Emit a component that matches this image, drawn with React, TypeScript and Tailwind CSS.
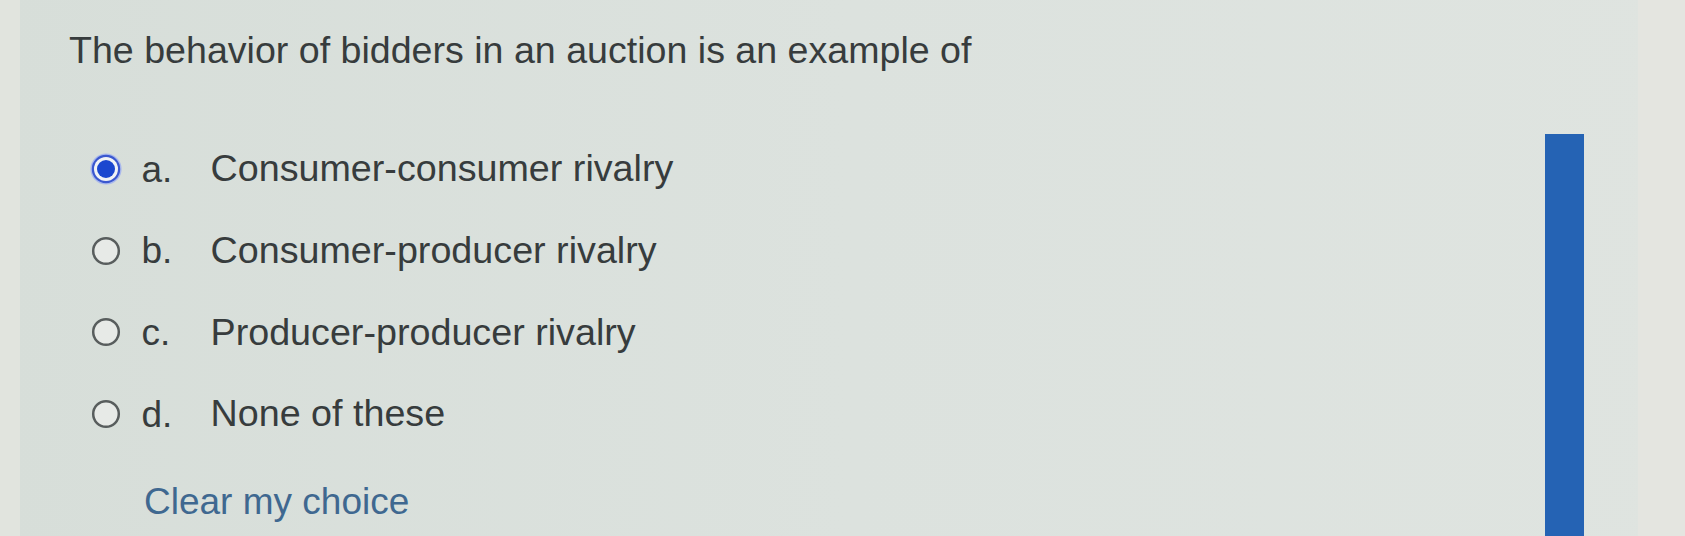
import React from "react";

function Radio({ checked }: { checked?: boolean }) {
  if (checked) {
    return (
      <svg width="32" height="32" viewBox="0 0 32 32" className="shrink-0">
        <circle cx="16" cy="16" r="15.6" fill="#a9b8ec" />
        <circle cx="16" cy="16" r="14.2" fill="#3b58cf" />
        <circle cx="16" cy="16" r="12" fill="#f1f3f6" />
        <circle cx="16" cy="16" r="9" fill="#1b47cf" />
      </svg>
    );
  }
  return (
    <svg width="32" height="32" viewBox="0 0 32 32" className="shrink-0">
      <circle cx="16" cy="16" r="12.8" fill="#e7eae7" stroke="#585d5d" strokeWidth="2.5" />
    </svg>
  );
}

const options = [
  { letter: "a.", text: "Consumer-consumer rivalry", checked: true },
  { letter: "b.", text: "Consumer-producer rivalry" },
  { letter: "c.", text: "Producer-producer rivalry" },
  { letter: "d.", text: "None of these" },
];

export default function App() {
  return (
    <div
      className="w-[1685px] h-[536px] flex overflow-hidden bg-gradient-to-r from-[#d7ded9] via-[#dce2de] to-[#dfe4e0] text-[#373c3d]"
      style={{ fontFamily: '"Liberation Sans", Arial, sans-serif' }}
    >
      <div className="w-[20px] bg-[#e1e4de]" />
      <main className="flex-1 pl-[49px] pt-[32px]">
        <h1 className="text-[37.6px] leading-none font-normal">
          The behavior of bidders in an auction is an example of
        </h1>
        <ul className="mt-[81px] flex flex-col gap-[44.7px]">
          {options.map((o) => (
            <li key={o.letter} className="flex items-center h-[37px] ml-[21px]">
              <Radio checked={o.checked} />
              <span className="ml-[19.5px] w-[69px] text-[37px] leading-none">{o.letter}</span>
              <span className="text-[37.7px] leading-none">{o.text}</span>
            </li>
          ))}
        </ul>
        <div className="mt-[50px] ml-[75px] text-[37px] leading-none text-[#3f6890]">
          Clear my choice
        </div>
      </main>
      <div className="w-[39px] pt-[134px]">
        <div className="h-full bg-[#2563b4]" />
      </div>
      <div className="w-[54px]" />
      <div className="w-[47px] bg-[#e4e5e0]" />
    </div>
  );
}
